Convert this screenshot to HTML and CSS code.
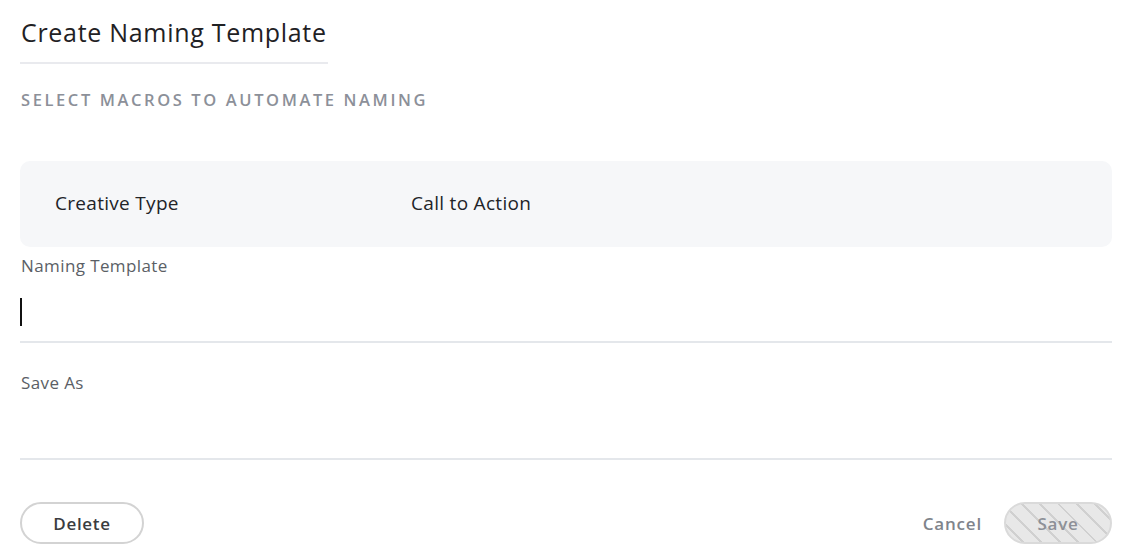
FILE: index.html
```html
<!DOCTYPE html>
<html lang="en">
<head>
<meta charset="utf-8">
<title>Create Naming Template</title>
<link rel="stylesheet" href="styles.css">
</head>
<body>
<div class="page">
  <header class="head">
    <h1 class="title">Create Naming Template</h1>
  </header>
  <h2 class="subtitle">SELECT MACROS TO AUTOMATE NAMING</h2>
  <div class="macros">
    <span class="macro">Creative Type</span>
    <span class="macro">Call to Action</span>
  </div>
  <div class="field">
    <label class="label">Naming Template</label>
    <div class="input"><span class="cursor"></span></div>
  </div>
  <div class="field">
    <label class="label">Save As</label>
    <div class="input"></div>
  </div>
  <footer class="actions">
    <button class="btn btn-outline">Delete</button>
    <div class="right">
      <button class="btn-link">Cancel</button>
      <button class="btn btn-disabled">Save</button>
    </div>
  </footer>
</div>
</body>
</html>
```
FILE: styles.css
```css
* { box-sizing: border-box; }
body {
  margin: 0;
  background: #fff;
  font-family: "Open Sans", "Noto Sans", sans-serif;
  color: #26282c;
}
.page {
  width: 1132px;
  padding: 0 20px;
}
.head {
  display: inline-block;
  padding-top: 16px;
  padding-bottom: 14px;
  border-bottom: 2px solid #e9eaee;
}
.title {
  margin: 0;
  font-size: 25px;
  line-height: 32px;
  font-weight: 400;
  letter-spacing: 0.7px;
  color: #1f2124;
  padding-left: 1px;
  padding-right: 1px;
}
.subtitle {
  margin: 25px 0 0;
  font-size: 16.5px;
  line-height: 21px;
  font-weight: 600;
  letter-spacing: 2.6px;
  color: #8c9099;
  padding-left: 1px;
}
.macros {
  margin-top: 51px;
  height: 86px;
  background: #f6f7f9;
  border-radius: 10px;
  display: flex;
  align-items: center;
  padding-left: 35px;
  padding-bottom: 2px;
}
.macro {
  font-size: 19px;
  font-weight: 500;
  letter-spacing: 0.3px;
  color: #222428;
  width: 356px;
}
.field {
  display: flex;
  flex-direction: column;
}
.label {
  margin-top: 8px;
  font-size: 17px;
  line-height: 22px;
  font-weight: 500;
  letter-spacing: 0.4px;
  color: #5b5f66;
  padding-left: 1px;
}
.input {
  height: 66px;
  border-bottom: 2px solid #e4e7eb;
  display: flex;
  align-items: center;
}
.cursor {
  display: block;
  width: 2px;
  height: 28px;
  background: #111;
  margin-top: 5px;
}
.field + .field .label { margin-top: 29px; }
.actions {
  margin-top: 42px;
  display: flex;
  justify-content: space-between;
  align-items: center;
}
.right {
  display: flex;
  align-items: center;
  gap: 22px;
}
.btn {
  height: 42px;
  border-radius: 21px;
  font-family: inherit;
  font-size: 17px;
  font-weight: 600;
  letter-spacing: 0.7px;
  cursor: pointer;
}
.btn-outline {
  width: 124px;
  background: #fff;
  border: 2px solid #d3d3d3;
  color: #3a3c40;
}
.btn-link {
  background: none;
  border: none;
  font-family: inherit;
  font-size: 17px;
  font-weight: 600;
  letter-spacing: 0.8px;
  color: #80848b;
  padding: 0;
}
.btn-disabled {
  width: 108px;
  border: 2px solid #dadada;
  color: #8d9097;
  background: #e8e8e8 repeating-linear-gradient(45deg, #e8e8e8 0 11px, #d0d0d0 11px 13px);
}
```
